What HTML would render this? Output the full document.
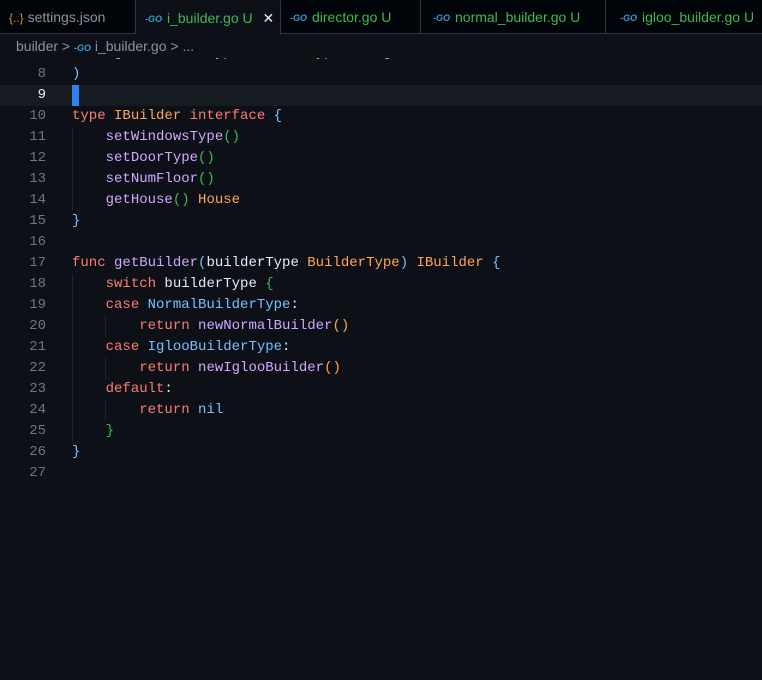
<!DOCTYPE html><html><head><style>
body{margin:0;width:762px;height:680px;background:#0d1117;overflow:hidden;font-family:"Liberation Sans",sans-serif;position:relative}
.tabs{position:absolute;top:0;left:0;width:762px;height:34px;background:#010409;border-bottom:1px solid #30363d;box-sizing:border-box}
.tab{position:absolute;top:0;height:34px;box-sizing:border-box;border-right:1px solid #30363d;font-size:14px;line-height:34px;color:#3fb950;white-space:nowrap;overflow:hidden}
.tab .go{color:#3b9bcf;font-size:9px;font-weight:bold;font-style:italic;margin-right:5px;vertical-align:1px}
.act{background:#0d1117;height:35px;border-top:1px solid #0d1117}
.bc{position:absolute;top:36px;left:16px;font-size:14px;color:#8b949e;line-height:20px}
.code{position:absolute;left:0;top:43px;width:762px;font-family:"Liberation Mono",monospace;font-size:14px}
.l{height:21px;line-height:21px;position:relative;white-space:pre;color:#e6edf3}
.n{position:absolute;left:0;width:46px;text-align:right;color:#6e7681}
.t{position:absolute;left:72px}
.k{color:#ff7b72}.f{color:#d2a8ff}.y{color:#ffa657}.c{color:#79c0ff}.g{color:#3fb950}.p{color:#79c0ff}
.cur{background:#161b22}
.g1{position:absolute;left:72px;width:1px;background:#21262d}
</style></head><body>
<div class="tabs">
<div class="tab" style="left:0;width:136px;padding-left:9px;color:#8b949e"><span style="color:#d29922;font-size:12px">{..}</span> settings.json</div>
<div class="tab act" style="left:136px;width:145px;padding-left:9px"><span class="go">-GO</span>i_builder.go U <span style="color:#e6edf3;margin-left:6px">✕</span></div>
<div class="tab" style="left:281px;width:140px;padding-left:9px"><span class="go">-GO</span>director.go U</div>
<div class="tab" style="left:421px;width:185px;padding-left:12px"><span class="go">-GO</span>normal_builder.go U</div>
<div class="tab" style="left:606px;width:156px;padding-left:14px;border-right:none"><span class="go">-GO</span>igloo_builder.go U</div>
</div>
<div class="bc">builder &gt; <span style="color:#3b9bcf;font-size:9px;font-weight:bold;font-style:italic">-GO</span> i_builder.go &gt; ...</div>
<div class="code">
<div class="g1" style="top:84px;height:84px"></div>
<div class="g1" style="top:231px;height:168px"></div>
<div class="g1" style="left:105px;top:273px;height:21px"></div>
<div class="g1" style="left:105px;top:315px;height:21px"></div>
<div class="g1" style="left:105px;top:357px;height:21px"></div>
<div class="l" style="clip-path:inset(15px 0 0 0)"><span class="n">7</span><span class="t">    <span class="c">IglooBuilderType</span> <span class="y">BuilderType</span> = <span class="c">"igloo"</span></span></div>
<div class="l"><span class="n">8</span><span class="t"><span class="p">)</span></span></div>
<div class="l cur"><span class="n" style="color:#e6edf3">9</span><span class="t"><span style="display:inline-block;width:7px;height:21px;background:#2f81f7;vertical-align:top"></span></span></div>
<div class="l"><span class="n">10</span><span class="t"><span class="k">type</span> <span class="y">IBuilder</span> <span class="k">interface</span> <span class="p">{</span></span></div>
<div class="l"><span class="n">11</span><span class="t">    <span class="f">setWindowsType</span><span class="g">()</span></span></div>
<div class="l"><span class="n">12</span><span class="t">    <span class="f">setDoorType</span><span class="g">()</span></span></div>
<div class="l"><span class="n">13</span><span class="t">    <span class="f">setNumFloor</span><span class="g">()</span></span></div>
<div class="l"><span class="n">14</span><span class="t">    <span class="f">getHouse</span><span class="g">()</span> <span class="y">House</span></span></div>
<div class="l"><span class="n">15</span><span class="t"><span class="p">}</span></span></div>
<div class="l"><span class="n">16</span></div>
<div class="l"><span class="n">17</span><span class="t"><span class="k">func</span> <span class="f">getBuilder</span><span class="p">(</span>builderType <span class="y">BuilderType</span><span class="p">)</span> <span class="y">IBuilder</span> <span class="p">{</span></span></div>
<div class="l"><span class="n">18</span><span class="t">    <span class="k">switch</span> builderType <span class="g">{</span></span></div>
<div class="l"><span class="n">19</span><span class="t">    <span class="k">case</span> <span class="c">NormalBuilderType</span>:</span></div>
<div class="l"><span class="n">20</span><span class="t">        <span class="k">return</span> <span class="f">newNormalBuilder</span><span class="y">()</span></span></div>
<div class="l"><span class="n">21</span><span class="t">    <span class="k">case</span> <span class="c">IglooBuilderType</span>:</span></div>
<div class="l"><span class="n">22</span><span class="t">        <span class="k">return</span> <span class="f">newIglooBuilder</span><span class="y">()</span></span></div>
<div class="l"><span class="n">23</span><span class="t">    <span class="k">default</span>:</span></div>
<div class="l"><span class="n">24</span><span class="t">        <span class="k">return</span> <span class="c">nil</span></span></div>
<div class="l"><span class="n">25</span><span class="t">    <span class="g">}</span></span></div>
<div class="l"><span class="n">26</span><span class="t"><span class="p">}</span></span></div>
<div class="l"><span class="n">27</span></div>
</div>
</body></html>
